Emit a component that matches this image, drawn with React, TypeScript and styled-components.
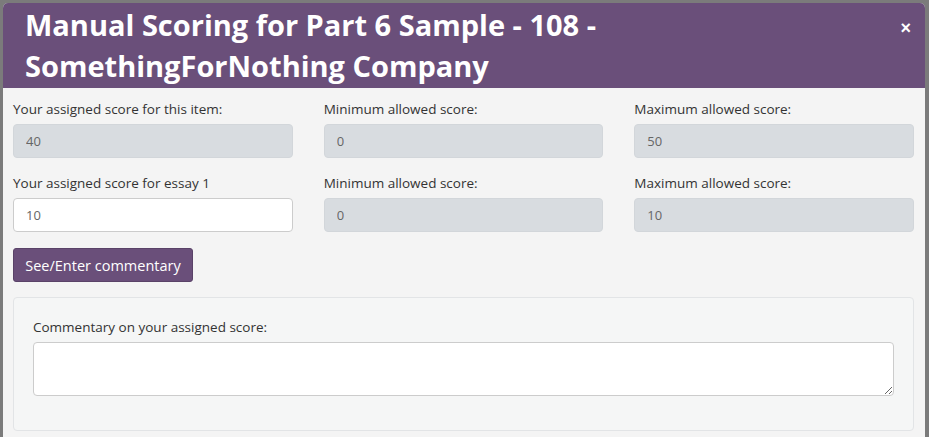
import React from "react";
import styled, { createGlobalStyle } from "styled-components";

const GlobalStyle = createGlobalStyle`
  html, body {
    margin: 0;
    padding: 0;
    background: #7b7b7b;
    font-family: "Open Sans", "Liberation Sans", sans-serif;
  }
`;

const Backdrop = styled.div`
  height: 437px;
  padding: 3px 4px 0 3px;
  box-sizing: border-box;
  overflow: hidden;
`;

const Dialog = styled.div`
  background: #f4f4f4;
  border-radius: 5px 5px 0 0;
  overflow: hidden;
  height: 100%;
`;

const Header = styled.div`
  display: flex;
  align-items: flex-start;
  background: #6a4f7a;
  color: #fff;
  padding: 1px 14px 4px 22px;
  height: 85px;
  box-sizing: border-box;
`;

const Title = styled.h2`
  flex: 1;
  margin: 0;
  padding-right: 40px;
  font-size: 29px;
  line-height: 41px;
  font-weight: 700;
`;

const Close = styled.button`
  background: none;
  border: none;
  color: #fff;
  font-size: 18px;
  font-weight: 700;
  padding: 0;
  margin-top: 15px;
  line-height: 1;
  cursor: pointer;
`;

const Body = styled.div`
  padding: 12px 11px 0 10px;
`;

const Row = styled.div`
  display: grid;
  grid-template-columns: repeat(3, 1fr);
  column-gap: 31px;
  margin-bottom: 16px;

  &:last-of-type {
    margin-bottom: 15px;
  }
`;

const Field = styled.div`
  display: flex;
  flex-direction: column;
`;

const Label = styled.label`
  display: block;
  font-size: 13.5px;
  color: #333;
  line-height: 18px;
  margin-bottom: 6px;
`;

const Input = styled.input<{ $readOnly?: boolean }>`
  height: 34px;
  box-sizing: border-box;
  border: 1px solid ${p => (p.$readOnly ? "#d2d6da" : "#cccccc")};
  border-radius: 4px;
  background: ${p => (p.$readOnly ? "#d8dce0" : "#ffffff")};
  color: #666;
  font-family: inherit;
  font-size: 13px;
  padding: 0 12px;
  outline: none;
`;

const Button = styled.button`
  display: block;
  background: #6a4f7a;
  border: 1px solid #5a4268;
  border-radius: 3px;
  color: #fff;
  font-family: inherit;
  font-size: 14.5px;
  height: 34px;
  width: 180px;
  padding: 0;
  cursor: pointer;
`;

const Panel = styled.div`
  margin-top: 15px;
  background: #f5f6f6;
  border: 1px solid #e2e4e6;
  border-radius: 4px;
  padding: 20px 19px 34px 19px;
`;

const TextArea = styled.textarea`
  display: block;
  width: 100%;
  height: 54px;
  box-sizing: border-box;
  border: 1px solid #cccccc;
  border-radius: 4px;
  background: #fff;
  font-family: inherit;
  resize: vertical;
`;

const rows = [
  [
    { label: "Your assigned score for this item:", value: "40", readOnly: true },
    { label: "Minimum allowed score:", value: "0", readOnly: true },
    { label: "Maximum allowed score:", value: "50", readOnly: true },
  ],
  [
    { label: "Your assigned score for essay 1", value: "10", readOnly: false },
    { label: "Minimum allowed score:", value: "0", readOnly: true },
    { label: "Maximum allowed score:", value: "10", readOnly: true },
  ],
];

export default function App() {
  return (
    <>
      <GlobalStyle />
      <Backdrop>
        <Dialog>
          <Header>
            <Title>Manual Scoring for Part 6 Sample - 108 - SomethingForNothing Company</Title>
            <Close aria-label="Close">×</Close>
          </Header>
          <Body>
            {rows.map((fields, i) => (
              <Row key={i}>
                {fields.map((f, j) => (
                  <Field key={j}>
                    <Label>{f.label}</Label>
                    <Input
                      defaultValue={f.value}
                      readOnly={f.readOnly}
                      $readOnly={f.readOnly}
                    />
                  </Field>
                ))}
              </Row>
            ))}
            <Button>See/Enter commentary</Button>
            <Panel>
              <Label>Commentary on your assigned score:</Label>
              <TextArea />
            </Panel>
          </Body>
        </Dialog>
      </Backdrop>
    </>
  );
}
